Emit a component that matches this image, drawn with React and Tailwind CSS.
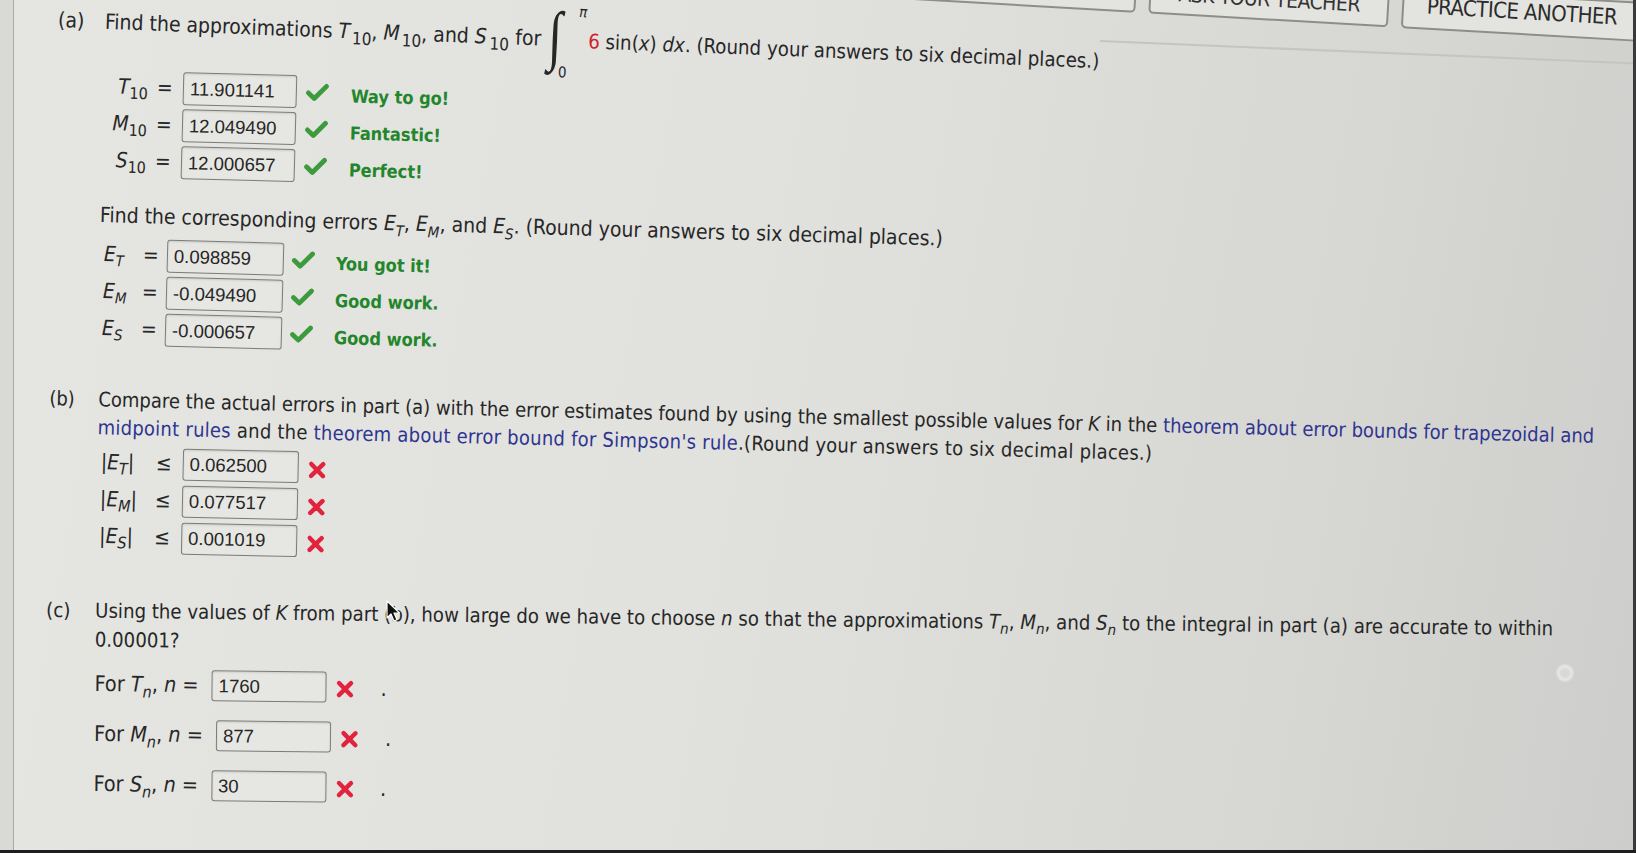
import React from "react";

const FONT = "[font-family:'DejaVu_Sans_Condensed','DejaVu_Sans',sans-serif]";
const BOXFONT = "[font-family:'Liberation_Sans',Arial,sans-serif]";

function V({ children }) {
  return <i className="italic">{children}</i>;
}
function Sub({ children, className = "text-[15px]" }) {
  return <sub className={"bottom-[-0.35em] " + className}>{children}</sub>;
}

function Check() {
  return (
    <svg width="25" height="20" viewBox="0 0 25 20" className="block">
      <path d="M3.5 10.5 L9.5 16 L21.5 3.5" fill="none" stroke="#3d9a3d" strokeWidth="4.8" strokeLinecap="round" strokeLinejoin="round" />
    </svg>
  );
}

function Cross() {
  return (
    <svg width="19" height="19" viewBox="0 0 19 19" className="block">
      <path d="M3.5 3.5 L15.5 15.5 M15.5 3.5 L3.5 15.5" fill="none" stroke="#e2233d" strokeWidth="4.4" strokeLinecap="round" />
    </svg>
  );
}

function Box({ value, className }) {
  return (
    <div
      className={
        "shrink-0 border border-[#7b7b79] rounded-[3px] bg-[#e6e6e3] shadow-[inset_0_1px_2px_rgba(0,0,0,0.12)] flex items-center pl-[6px] text-[18.5px] text-[#262626] " +
        BOXFONT +
        " " +
        className
      }
    >
      {value}
    </div>
  );
}

function Praise({ children, className }) {
  return <span className={"text-[18px] font-bold text-[#23862b] " + className}>{children}</span>;
}

export default function App() {
  return (
    <div className={"relative w-[1636px] h-[853px] overflow-hidden text-[#272727] text-[20px] bg-[linear-gradient(100deg,#e5e5e2_0%,#e1e1de_45%,#d6d6d3_80%,#cdcecb_100%)] " + FONT}>
      <div className="flex h-full">
        {/* left margin strip */}
        <div className="w-[14px] shrink-0 bg-[#d9d9d6] border-r border-[#a9a9a6]" />

        {/* main column */}
        <div className="flex flex-col flex-1">
          {/* (a) heading */}
          <div className="mt-[7px] ml-[44px] h-[28px] flex items-center whitespace-nowrap text-[21px] rotate-[2.2deg] origin-left">
            <span className="w-[47px]">(a)</span>
            <span>
              Find the approximations <V>T</V>
              <Sub className="text-[17px] ml-[2px]">10</Sub>, <V>M</V>
              <Sub className="text-[17px] ml-[2px]">10</Sub>, and <V>S</V>
              <Sub className="text-[17px] ml-[3px]">10</Sub> for
            </span>
            <span className="relative inline-block w-[40px] h-[24px] ml-[7px]">
              <span className="absolute left-[0px] top-[-18px] text-[50px] leading-none scale-y-[1.32] [font-family:'Liberation_Serif',serif]">∫</span>
              <span className="absolute left-[30px] top-[-24px] text-[15px] italic leading-none">π</span>
              <span className="absolute left-[11px] top-[37px] text-[15px] leading-none">0</span>
            </span>
            <span className="text-[20.3px]">
              <span className="text-[#d3202e]">6</span> sin(<V>x</V>) <V>dx</V>. (Round your answers to six decimal places.)
            </span>
          </div>

          {/* (a) rows */}
          <div className="mt-[35px] ml-[89px] flex flex-col gap-[4px] text-[21px] rotate-[1.5deg] origin-left">
            {[
              ["T", "11.901141", "Way to go!"],
              ["M", "12.049490", "Fantastic!"],
              ["S", "12.000657", "Perfect!"],
            ].map(([l, v, p]) => (
              <div key={l} className="flex items-center h-[33px] whitespace-nowrap">
                <span className="w-[44px] text-right">
                  <V>{l}</V>
                  <Sub className="text-[16px]">10</Sub>
                </span>
                <span className="w-[35px] pl-[9px]">=</span>
                <Box value={v} className="w-[114px] h-[33px]" />
                <span className="ml-[8px]">
                  <Check />
                </span>
                <Praise className="ml-[21px] mt-[6px]">{p}</Praise>
              </div>
            ))}
          </div>

          {/* errors heading */}
          <div className="mt-[25px] ml-[86px] h-[28px] flex items-center whitespace-nowrap text-[21px] rotate-[1.6deg] origin-left">
            <span>
              Find the corresponding errors <V>E</V>
              <Sub>
                <V>T</V>
              </Sub>
              , <V>E</V>
              <Sub>
                <V>M</V>
              </Sub>
              , and <V>E</V>
              <Sub>
                <V>S</V>
              </Sub>
              . (Round your answers to six decimal places.)
            </span>
          </div>

          {/* error rows */}
          <div className="mt-[8px] ml-[89px] flex flex-col gap-[4px] text-[21px] rotate-[1.5deg] origin-left">
            {[
              ["T", "0.098859", "You got it!"],
              ["M", "-0.049490", "Good work."],
              ["S", "-0.000657", "Good work."],
            ].map(([l, v, p]) => (
              <div key={l} className="flex items-center h-[33px] whitespace-nowrap">
                <span className="w-[38px]">
                  <V>E</V>
                  <Sub className="text-[15px]">
                    <V>{l}</V>
                  </Sub>
                </span>
                <span className="w-[25px] pl-[1px]">=</span>
                <Box value={v} className="w-[117px] h-[33px]" />
                <span className="ml-[7px]">
                  <Check />
                </span>
                <Praise className="ml-[20px] mt-[6px]">{p}</Praise>
              </div>
            ))}
          </div>

          {/* (b) heading */}
          <div className="mt-[39px] ml-[35px] flex whitespace-nowrap leading-[28px] rotate-[1.4deg] origin-left">
            <span className="w-[49px] shrink-0">(b)</span>
            <div className="flex flex-col">
              <span>
                Compare the actual errors in part (a) with the error estimates found by using the smallest possible values for <V>K</V> in the{" "}
                <span className="text-[#2f3590]">theorem about error bounds for trapezoidal and</span>
              </span>
              <span className="tracking-[0.25px]">
                <span className="text-[#2f3590]">midpoint rules</span> and the{" "}
                <span className="text-[#2f3590]">theorem about error bound for Simpson's rule</span>.(Round your answers to six decimal places.)
              </span>
            </div>
          </div>

          {/* (b) rows */}
          <div className="mt-[6px] ml-[86px] flex flex-col gap-[4px] text-[21px] rotate-[1.2deg] origin-left">
            {[
              ["T", "0.062500"],
              ["M", "0.077517"],
              ["S", "0.001019"],
            ].map(([l, v]) => (
              <div key={l} className="flex items-center h-[33px] whitespace-nowrap">
                <span className="w-[52px]">
                  |<V>E</V>
                  <Sub className="text-[16px]">
                    <V>{l}</V>
                  </Sub>
                  |
                </span>
                <span className="w-[30px] pl-[3px]">≤</span>
                <Box value={v} className="w-[116px] h-[32px]" />
                <span className="ml-[9px] mt-[6px]">
                  <Cross />
                </span>
              </div>
            ))}
          </div>

          {/* (c) heading */}
          <div className="mt-[43px] ml-[32px] flex whitespace-nowrap leading-[29px] text-[20.2px] rotate-[0.7deg] origin-left">
            <span className="w-[49px] shrink-0">(c)</span>
            <div className="flex flex-col">
              <span>
                Using the values of <V>K</V> from part (b), how large do we have to choose <V>n</V> so that the approximations <V>T</V>
                <Sub>
                  <V>n</V>
                </Sub>
                , <V>M</V>
                <Sub>
                  <V>n</V>
                </Sub>
                , and <V>S</V>
                <Sub>
                  <V>n</V>
                </Sub>{" "}
                to the integral in part (a) are accurate to within
              </span>
              <span>0.00001?</span>
            </div>
          </div>

          {/* (c) rows */}
          <div className="mt-[15px] ml-[80px] flex flex-col gap-[19px] text-[21.5px] rotate-[0.6deg] origin-left">
            {[
              ["T", "1760"],
              ["M", "877"],
              ["S", "30"],
            ].map(([l, v]) => (
              <div key={l} className="flex items-center h-[31px] whitespace-nowrap">
                <span>
                  For <V>{l}</V>
                  <Sub className="text-[16px]">
                    <V>n</V>
                  </Sub>
                  , <V>n</V> =
                </span>
                <Box value={v} className="ml-[13px] w-[115px] h-[31px]" />
                <span className="ml-[9px] mt-[4px]">
                  <Cross />
                </span>
                <span className="ml-[26px] mt-[4px]">.</span>
              </div>
            ))}
          </div>
        </div>
      </div>

      {/* top toolbar buttons (cut off by the top edge) */}
      <div className="absolute left-[880px] top-[-42px] w-[800px] flex gap-[13px] rotate-[3.3deg] origin-top-left">
        <div className="w-[258px] h-[40px] shrink-0 border-2 border-[#8d8d8a] rounded-[5px] bg-[#e3e3e0]" />
        <div className="w-[240px] h-[40px] shrink-0 border-2 border-[#8d8d8a] rounded-[5px] bg-[#e3e3e0] flex items-center justify-center text-[21px] text-[#333] tracking-tight">
          ASK YOUR TEACHER
        </div>
        <div className="w-[240px] h-[40px] shrink-0 border-2 border-[#8d8d8a] rounded-[5px] bg-[#e3e3e0] flex items-center justify-center text-[22px] text-[#2c2c2c] tracking-tight pb-[8px]">
          PRACTICE ANOTHER
        </div>
      </div>
      <div className="absolute left-[1100px] top-[40px] w-[560px] h-[2px] bg-[#c4c4c1] rotate-[2.4deg] origin-left" />

      {/* reflection spot */}
      <div className="absolute left-[1557px] top-[665px] w-[16px] h-[16px] rounded-full border-2 border-white/60 bg-white/20 blur-[1px]" />

      {/* mouse cursor */}
      <svg className="absolute left-[386px] top-[600px]" width="16" height="24" viewBox="0 0 16 24">
        <path d="M1 1 L1 18 L5 14 L8 21 L11 19.8 L8 13 L13.5 13 Z" fill="#111" stroke="#fff" strokeWidth="1.2" strokeLinejoin="round" />
      </svg>

      {/* screen edges */}
      <div className="absolute right-0 top-0 w-[3px] h-full bg-[#3a3a3a]" />
      <div className="absolute left-0 bottom-0 w-full h-[3px] bg-[#1e1e1e]" />
    </div>
  );
}
